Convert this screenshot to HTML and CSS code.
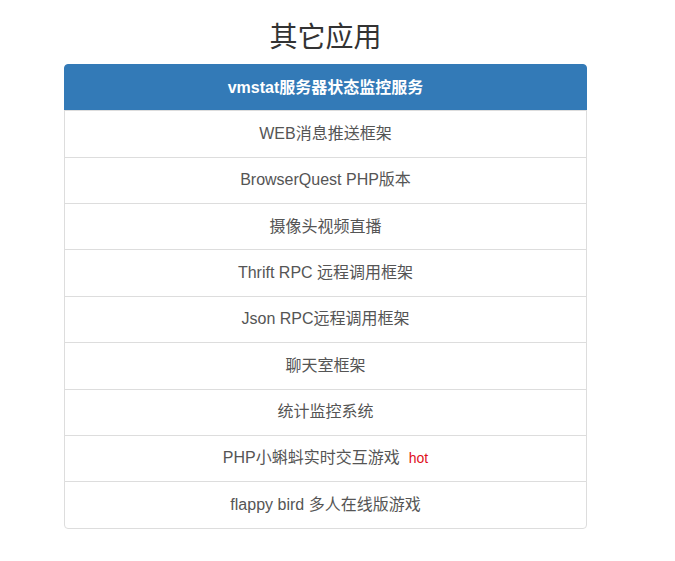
FILE: index.html
```html
<!DOCTYPE html>
<html lang="zh-CN">
<head>
<meta charset="utf-8">
<title>其它应用</title>
<link rel="stylesheet" href="styles.css">
</head>
<body>
<div class="page">
  <h2 class="title">其它应用</h2>
  <ul class="list">
    <li class="item active">vmstat服务器状态监控服务</li>
    <li class="item">WEB消息推送框架</li>
    <li class="item">BrowserQuest PHP版本</li>
    <li class="item">摄像头视频直播</li>
    <li class="item">Thrift RPC 远程调用框架</li>
    <li class="item">Json RPC远程调用框架</li>
    <li class="item">聊天室框架</li>
    <li class="item">统计监控系统</li>
    <li class="item">PHP小蝌蚪实时交互游戏<span class="hot">hot</span></li>
    <li class="item">flappy bird 多人在线版游戏</li>
  </ul>
</div>
</body>
</html>
```
FILE: styles.css
```css
html, body {
  margin: 0;
  padding: 0;
  background: #fff;
}
body {
  font-family: "Liberation Sans", Arial, "Noto Sans CJK SC", sans-serif;
  color: #555;
}
.page {
  width: 523px;
  margin-left: 64px;
}
.title {
  margin: 21px 0 9px;
  font-size: 28px;
  line-height: 34px;
  font-weight: 400;
  text-align: center;
  color: #333;
}
.list {
  list-style: none;
  margin: 0;
  padding: 0;
}
.item {
  display: block;
  padding: 11.5px 15px 11px;
  font-size: 16px;
  line-height: 22.86px;
  text-align: center;
  border: 1px solid #ddd;
  margin-bottom: -1px;
  background: #fff;
}
.item:first-child {
  border-top-left-radius: 4px;
  border-top-right-radius: 4px;
}
.item:last-child {
  border-bottom-left-radius: 4px;
  border-bottom-right-radius: 4px;
  margin-bottom: 0;
}
.item.active {
  background: #337ab7;
  border-color: #337ab7;
  color: #fff;
  font-weight: bold;
}
.hot {
  color: #e0101c;
  font-size: 14px;
  margin-left: 9px;
}
```
